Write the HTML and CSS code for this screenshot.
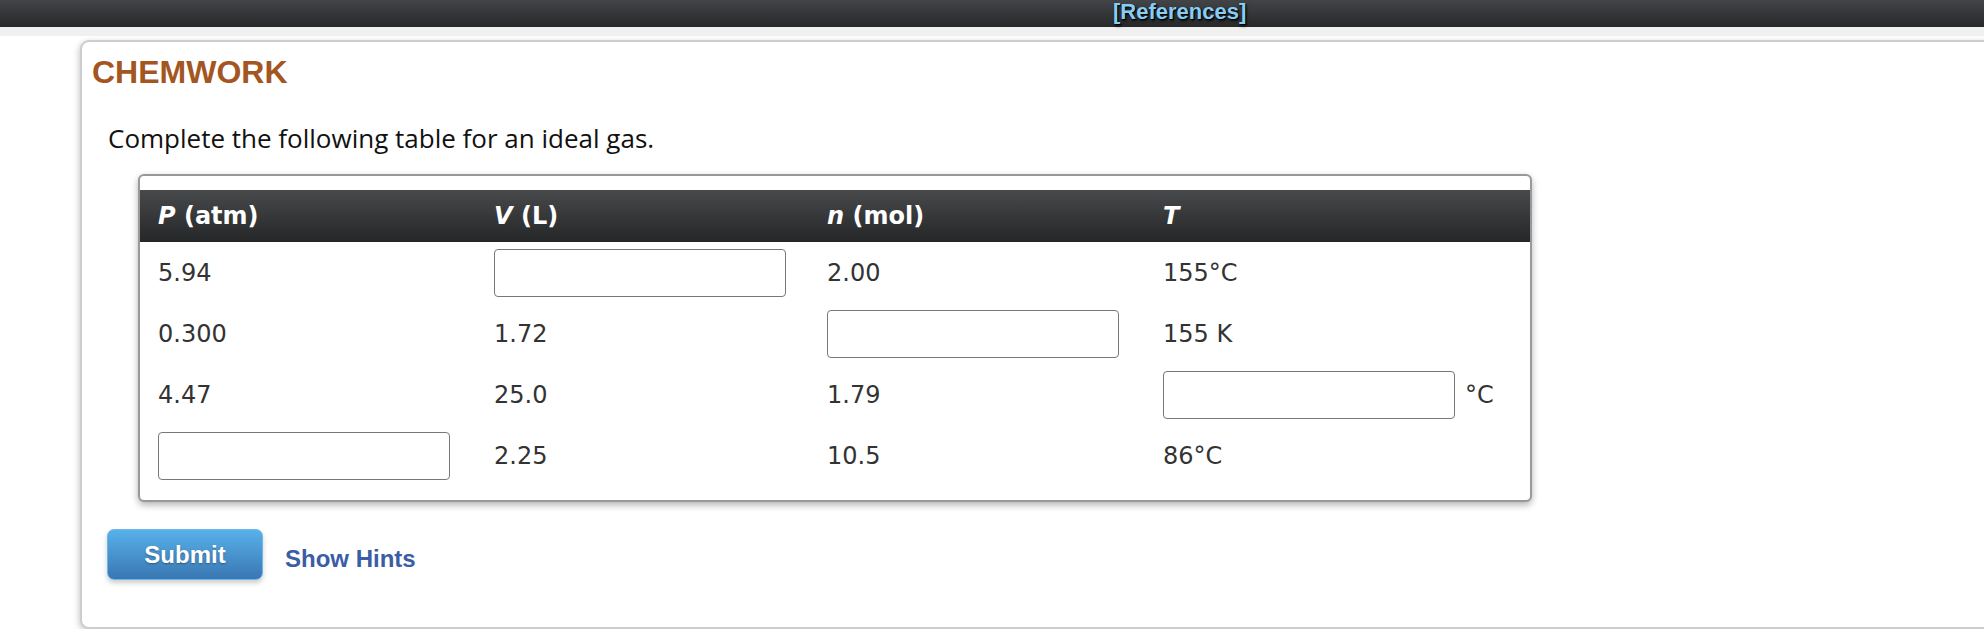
FILE: index.html
```html
<!DOCTYPE html>
<html lang="en">
<head>
<meta charset="utf-8">
<title>CHEMWORK</title>
<link rel="stylesheet" href="styles.css">
</head>
<body>
<header class="toolbar">
  <a class="refs" href="#">[References]</a>
</header>
<div class="band"></div>
<main class="card">
  <h1 class="title">CHEMWORK</h1>
  <p class="prompt">Complete the following table for an ideal gas.</p>
  <div class="table-box">
    <table class="gas">
      <colgroup>
        <col class="c1"><col class="c2"><col class="c3"><col>
      </colgroup>
      <thead>
        <tr>
          <th><i>P</i> (atm)</th>
          <th><i>V</i> (L)</th>
          <th><i>n</i> (mol)</th>
          <th><i>T</i></th>
        </tr>
      </thead>
      <tbody>
        <tr>
          <td>5.94</td>
          <td><input class="field" type="text"></td>
          <td>2.00</td>
          <td>155°C</td>
        </tr>
        <tr>
          <td>0.300</td>
          <td>1.72</td>
          <td><input class="field" type="text"></td>
          <td>155 K</td>
        </tr>
        <tr>
          <td>4.47</td>
          <td>25.0</td>
          <td>1.79</td>
          <td><span class="with-unit"><input class="field" type="text"><span class="unit">°C</span></span></td>
        </tr>
        <tr>
          <td><input class="field" type="text"></td>
          <td>2.25</td>
          <td>10.5</td>
          <td>86°C</td>
        </tr>
      </tbody>
    </table>
  </div>
  <div class="actions">
    <button class="submit" type="button">Submit</button>
    <a class="hints" href="#">Show Hints</a>
  </div>
</main>
</body>
</html>
```

FILE: styles.css
```css
html, body {
  margin: 0;
  padding: 0;
  background: #ffffff;
  overflow: hidden;
}

body {
  font-family: "Open Sans", "DejaVu Sans", sans-serif;
  color: #222;
}

.toolbar {
  height: 27px;
  background: linear-gradient(#434447, #27282a);
  padding-left: 1113px;
  box-sizing: border-box;
}

.refs {
  display: inline-block;
  font-family: "Liberation Sans", Arial, sans-serif;
  font-weight: bold;
  font-size: 22px;
  line-height: 24px;
  color: #86cdf5;
  text-decoration: none;
  text-shadow: 1px 1px 1px #000, 1px 2px 3px rgba(0, 0, 0, 0.8);
}

.band {
  height: 9px;
  background: #f0f0f0;
  margin-bottom: 4px;
}

.card {
  margin-left: 80px;
  margin-right: -30px;
  height: 589px;
  box-sizing: border-box;
  border: 2px solid #cdcdcd;
  border-radius: 9px;
  background: #fff;
  box-shadow: -1px 2px 6px rgba(0, 0, 0, 0.22);
  padding: 12px 0 0 10px;
}

.title {
  margin: 0;
  font-family: "Liberation Sans", Arial, sans-serif;
  font-weight: bold;
  font-size: 32px;
  line-height: 36px;
  color: #a3561f;
}

.prompt {
  margin: 30px 0 0 16px;
  font-size: 26px;
  line-height: 36px;
  color: #111;
}

.table-box {
  margin: 18px 0 0 46px;
  width: 1394px;
  height: 328px;
  box-sizing: border-box;
  border: 2px solid #999;
  border-radius: 6px;
  padding-top: 14px;
  background: #fff;
  box-shadow: 0 3px 7px rgba(0, 0, 0, 0.3);
}

.gas {
  width: 100%;
  border-collapse: collapse;
  border-spacing: 0;
  table-layout: fixed;
  font-family: "DejaVu Sans", Verdana, sans-serif;
}

.c1 { width: 336px; }
.c2 { width: 333px; }
.c3 { width: 336px; }

.gas th {
  height: 52px;
  padding: 0 0 0 18px;
  text-align: left;
  font-weight: bold;
  font-size: 24px;
  color: #fff;
  background: linear-gradient(#48494b, #252628);
  vertical-align: middle;
}

.gas th i {
  font-style: italic;
}

.gas td {
  height: 61px;
  padding: 0 0 0 18px;
  font-size: 24px;
  color: #333;
  vertical-align: middle;
  white-space: nowrap;
}

.field {
  display: block;
  width: 292px;
  height: 48px;
  box-sizing: border-box;
  margin: 0;
  border: 1.5px solid #777;
  border-radius: 4px;
  background: #fff;
  font-size: 22px;
  padding: 0 8px;
}

.with-unit {
  display: flex;
  align-items: center;
  gap: 10px;
}

.unit {
  font-size: 24px;
  color: #333;
}

.actions {
  display: flex;
  align-items: center;
  margin: 27px 0 0 15px;
  gap: 22px;
}

.submit {
  width: 156px;
  height: 51px;
  box-sizing: border-box;
  border: 1.5px solid #6db8e8;
  border-radius: 7px;
  background: linear-gradient(#58b1ea, #3977b2);
  color: #fff;
  font-family: "Liberation Sans", Arial, sans-serif;
  font-weight: bold;
  font-size: 24px;
  text-shadow: 0 1px 2px rgba(0, 0, 0, 0.35);
  box-shadow: 0 3px 5px rgba(0, 0, 0, 0.2);
  padding: 0;
}

.hints {
  font-family: "Liberation Sans", Arial, sans-serif;
  font-weight: bold;
  font-size: 24px;
  color: #3a5da6;
  text-decoration: none;
  padding-top: 8px;
}
```
